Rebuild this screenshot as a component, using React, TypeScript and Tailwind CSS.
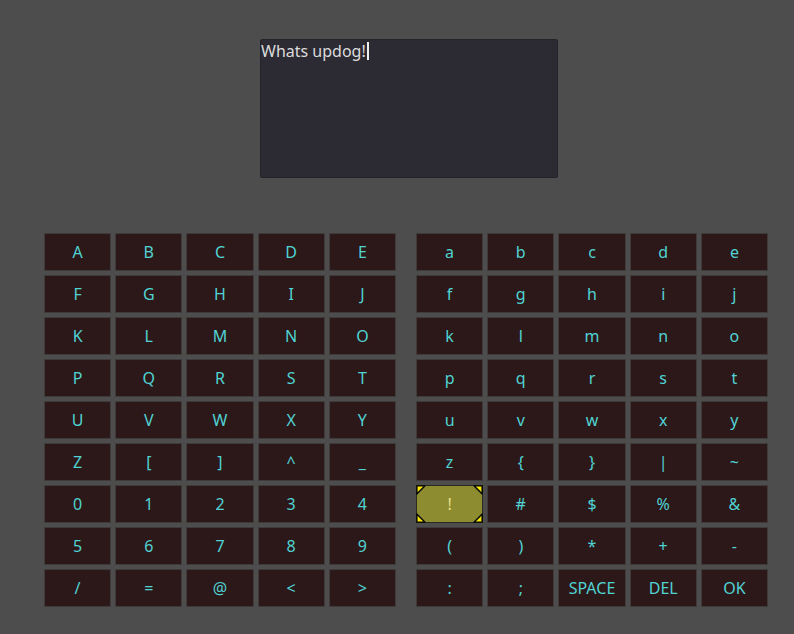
import React from "react";

const left = [
  ["A", "B", "C", "D", "E"],
  ["F", "G", "H", "I", "J"],
  ["K", "L", "M", "N", "O"],
  ["P", "Q", "R", "S", "T"],
  ["U", "V", "W", "X", "Y"],
  ["Z", "[", "]", "^", "_"],
  ["0", "1", "2", "3", "4"],
  ["5", "6", "7", "8", "9"],
  ["/", "=", "@", "<", ">"],
];

const right = [
  ["a", "b", "c", "d", "e"],
  ["f", "g", "h", "i", "j"],
  ["k", "l", "m", "n", "o"],
  ["p", "q", "r", "s", "t"],
  ["u", "v", "w", "x", "y"],
  ["z", "{", "}", "|", "~"],
  ["!", "#", "$", "%", "&"],
  ["(", ")", "*", "+", "-"],
  [":", ";", "SPACE", "DEL", "OK"],
];

function Corner({ rot, cls }: { rot: number; cls: string }) {
  return (
    <svg
      width="10"
      height="10"
      viewBox="0 0 10 10"
      className={`absolute ${cls}`}
      style={{ transform: `rotate(${rot}deg)` }}
    >
      <polygon points="0.8,0.8 9,0.8 0.8,9" fill="#f7ea00" stroke="#0d0d0d" strokeWidth="1.6" strokeLinejoin="round" />
    </svg>
  );
}

function Key({ label }: { label: string }) {
  if (label === "!") {
    return (
      <div className="relative h-[38px] bg-[#8e8c30] border border-[#2a2a20] flex items-center justify-center pb-[1px] text-[#e6e08a] text-[16px] leading-none">
        <Corner rot={0} cls="-left-[1px] -top-[1px]" />
        <Corner rot={90} cls="-right-[1px] -top-[1px]" />
        <Corner rot={180} cls="-right-[1px] -bottom-[1px]" />
        <Corner rot={270} cls="-left-[1px] -bottom-[1px]" />
        {label}
      </div>
    );
  }
  return (
    <div className="h-[38px] bg-[#2d1819] border border-[#3f3b3b] flex items-center justify-center pb-[1px] text-[#4fd3d3] text-[16px] leading-none">
      {label}
    </div>
  );
}

function Pad({ rows }: { rows: string[][] }) {
  return (
    <div className="w-[352px] grid grid-cols-5 gap-[4px]">
      {rows.flat().map((k, i) => (
        <Key key={i} label={k} />
      ))}
    </div>
  );
}

export default function App() {
  return (
    <div
      className="w-[794px] h-[634px] bg-[#4d4d4d] overflow-hidden"
      style={{ fontFamily: '"Noto Sans", "Open Sans", sans-serif' }}
    >
      <div className="pt-[39px] pl-[260px]">
        <div className="w-[298px] h-[139px] bg-[#2c2a33] border border-[#24232a] rounded-[2px]">
          <div className="flex items-center text-[16px] leading-[20px] text-[#dcdcdc] mt-[1px]">
            <span>Whats updog!</span>
            <span className="inline-block w-[2px] h-[18px] bg-[#f0f0f0] ml-[1px]" />
          </div>
        </div>
      </div>
      <div className="mt-[55px] ml-[44px] flex gap-[20px]">
        <Pad rows={left} />
        <Pad rows={right} />
      </div>
    </div>
  );
}
